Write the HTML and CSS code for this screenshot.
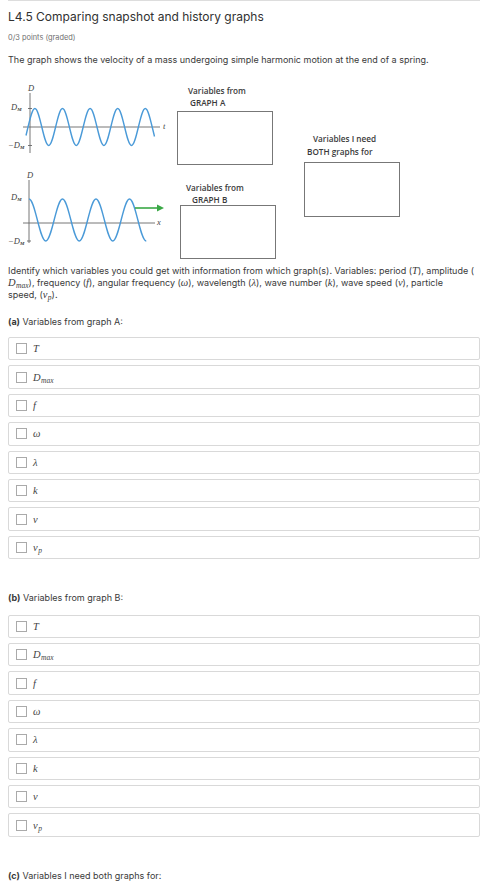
FILE: index.html
```html
<!DOCTYPE html>
<html lang="en">
<head>
    <meta charset="UTF-8">
    <meta name="viewport" content="width=device-width, initial-scale=1.0">
    <title>L4.5 Comparing snapshot and history graphs</title>
    <link rel="stylesheet" href="styles.css">
</head>
<body>
    <div class="problem">
        <h2 class="problem-title">L4.5 Comparing snapshot and history graphs</h2>
        <div class="points">0/3 points (graded)</div>

        <p class="intro">The graph shows the velocity of a mass undergoing simple harmonic motion at the end of a spring.</p>

        <!-- snapshot / history figure -->
        <svg class="figure" width="400" height="195" viewBox="8 70 400 195">
            <!-- graph A : history graph -->
            <g class="axis">
                <line x1="30" y1="93" x2="30" y2="153"/>
                <line x1="23" y1="127" x2="160" y2="127"/>
                <line x1="28" y1="108.5" x2="32" y2="108.5"/>
                <line x1="28" y1="145.5" x2="32" y2="145.5"/>
            </g>
            <text class="lbl" x="28" y="91">D</text>
            <text class="lbl" x="11" y="110">D<tspan class="sub" dy="1">M</tspan></text>
            <text class="lbl" x="8" y="148">−D<tspan class="sub" dy="1">M</tspan></text>
            <text class="lbl" x="163" y="129">t</text>
            <path class="wave" d="M26,135.5 L28,127 C30.31,117.29 32.42,108.5 34.9,108.5
                S39.49,117.29 41.8,127 S46.22,145.5 48.7,145.5 S53.29,136.71 55.6,127
                S60.02,108.5 62.5,108.5 S67.09,117.29 69.4,127 S73.82,145.5 76.3,145.5
                S80.89,136.71 83.2,127 S87.62,108.5 90.1,108.5 S94.69,117.29 97,127
                S101.42,145.5 103.9,145.5 S108.49,136.71 110.8,127 S115.22,108.5 117.7,108.5
                S122.29,117.29 124.6,127 S129.02,145.5 131.5,145.5 S136.09,136.71 138.4,127
                S142.82,108.5 145.3,108.5 S149.89,117.29 152.2,127 L154.5,136.5"/>

            <!-- graph B : snapshot graph -->
            <g class="axis">
                <line x1="29" y1="180" x2="29" y2="243"/>
                <line x1="23" y1="223" x2="155" y2="223"/>
                <line x1="27" y1="241" x2="31" y2="241"/>
            </g>
            <text class="lbl" x="27" y="178">D</text>
            <text class="lbl" x="11" y="200">D<tspan class="sub" dy="1">M</tspan></text>
            <text class="lbl" x="8" y="244">−D<tspan class="sub" dy="1">M</tspan></text>
            <text class="lbl" x="157" y="225">x</text>
            <path class="wave" d="M29,199 C32.02,199 34.58,208.97 37.38,220
                S42.74,241 45.75,241 S51.33,231.03 54.13,220 S59.49,199 62.5,199
                S68.08,208.97 70.88,220 S76.24,241 79.25,241 S84.83,231.03 87.63,220
                S92.99,199 96,199 S101.58,208.97 104.38,220 S109.74,241 112.75,241
                S118.33,231.03 121.13,220 S126.49,199 129.5,199 S135.08,208.97 137.88,220
                S143.24,241 146.25,241"/>
            <line class="arrow" x1="135" y1="208" x2="158" y2="208"/>
            <polygon class="arrow-head" points="157,204.5 164,208 157,211.5"/>

            <!-- answer boxes -->
            <text class="note" x="188" y="94">Variables from</text>
            <text class="note" x="190" y="106">GRAPH A</text>
            <rect class="box" x="177.5" y="111.5" width="95" height="53"/>

            <text class="note" x="186" y="191">Variables from</text>
            <text class="note" x="192" y="203">GRAPH B</text>
            <rect class="box" x="180.5" y="205.5" width="95" height="53"/>

            <text class="note" x="313" y="142">Variables I need</text>
            <text class="note" x="307" y="155">BOTH graphs for</text>
            <rect class="box" x="304.5" y="162.5" width="95" height="54"/>
        </svg>

        <p class="question">Identify which variables you could get with information from which graph(s). Variables: period (<span class="m">T</span>), amplitude (<wbr><span class="m">D<sub>max</sub></span>), frequency (<span class="m">f</span>), angular frequency (<span class="m">ω</span>), wavelength (<span class="m">λ</span>), wave number (<span class="m">k</span>), wave speed (<span class="m">v</span>), particle<br>speed, (<span class="m">v<sub>p</sub></span>).</p>

        <div class="part">
            <div class="part-title"><b>(a)</b> Variables from graph A:</div>
            <div class="choices">
                <label class="choice"><span class="check"></span><span class="m">T</span></label>
                <label class="choice"><span class="check"></span><span class="m">D<sub>max</sub></span></label>
                <label class="choice"><span class="check"></span><span class="m">f</span></label>
                <label class="choice"><span class="check"></span><span class="m">ω</span></label>
                <label class="choice"><span class="check"></span><span class="m">λ</span></label>
                <label class="choice"><span class="check"></span><span class="m">k</span></label>
                <label class="choice"><span class="check"></span><span class="m">v</span></label>
                <label class="choice"><span class="check"></span><span class="m">v<sub>p</sub></span></label>
            </div>
        </div>

        <div class="part">
            <div class="part-title"><b>(b)</b> Variables from graph B:</div>
            <div class="choices">
                <label class="choice"><span class="check"></span><span class="m">T</span></label>
                <label class="choice"><span class="check"></span><span class="m">D<sub>max</sub></span></label>
                <label class="choice"><span class="check"></span><span class="m">f</span></label>
                <label class="choice"><span class="check"></span><span class="m">ω</span></label>
                <label class="choice"><span class="check"></span><span class="m">λ</span></label>
                <label class="choice"><span class="check"></span><span class="m">k</span></label>
                <label class="choice"><span class="check"></span><span class="m">v</span></label>
                <label class="choice"><span class="check"></span><span class="m">v<sub>p</sub></span></label>
            </div>
        </div>

        <div class="part">
            <div class="part-title"><b>(c)</b> Variables I need both graphs for:</div>
        </div>
    </div>
</body>
</html>
```

FILE: styles.css
```css
body {
    margin: 0;
    background: #fff;
    font-family: Inter, "Open Sans", sans-serif;
    color: #3a3a3a;
}

.problem {
    margin: 0 14px 0 8px;
    border-top: 1px solid #ddd;
}

.problem-title {
    margin: 9px 0 0 0;
    font-size: 12px;
    line-height: 14px;
    font-weight: 400;
    color: #313131;
}

.points {
    margin-top: 8.5px;
    font-size: 7.4px;
    line-height: 9px;
    color: #707070;
}

.intro {
    margin: 12.5px 0 0 0;
    font-size: 9px;
    line-height: 12px;
}

.figure {
    display: block;
    margin-top: 4px;
}

.figure .axis line {
    stroke: #666;
    stroke-width: 0.9;
}

.figure .wave {
    fill: none;
    stroke: #4a9ad8;
    stroke-width: 1.4;
}

.figure .arrow {
    stroke: #3aa846;
    stroke-width: 1.6;
}

.figure .arrow-head {
    fill: #3aa846;
}

.figure .lbl {
    font-family: "Liberation Serif", serif;
    font-style: italic;
    font-size: 8.5px;
    fill: #444;
}

.figure .sub {
    font-size: 5px;
    font-weight: bold;
}

.figure .note {
    font-family: "Open Sans", sans-serif;
    font-size: 8.2px;
    font-weight: 600;
    fill: #3a3a3a;
}

.figure .box {
    fill: #fff;
    stroke: #777;
    stroke-width: 1;
}

.question {
    margin: 0;
    font-size: 9px;
    line-height: 12px;
}

.m {
    font-family: "Liberation Serif", serif;
    font-style: italic;
    font-size: 10.5px;
    line-height: 0;
}

.m sub {
    font-size: 7.5px;
    vertical-align: -2px;
    line-height: 0;
    padding-left: 0.5px;
}

.part-title {
    margin-top: 14.5px;
    font-size: 9px;
    line-height: 12px;
    margin-bottom: 9.5px;
}

.part + .part .part-title {
    margin-top: 33px;
    margin-bottom: 10.5px;
}

.choices {
    display: flex;
    flex-direction: column;
    gap: 5px;
}

.choice {
    display: flex;
    align-items: center;
    gap: 6px;
    box-sizing: border-box;
    height: 23.4px;
    padding-left: 7px;
    border: 1px solid #d9d9d9;
    border-radius: 2px;
    color: #444;
}

.check {
    box-sizing: border-box;
    width: 11px;
    height: 11px;
    border: 1px solid #aaa;
    background: #fff;
}

.choice .m {
    font-size: 10.5px;
    line-height: normal;
}
```
